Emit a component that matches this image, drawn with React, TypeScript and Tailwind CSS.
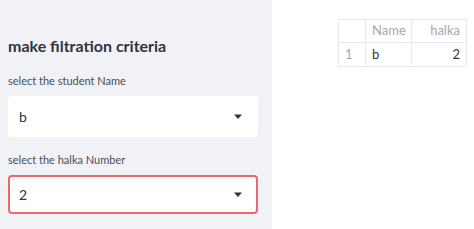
const font = { fontFamily: '"Source Sans Pro", Lato, "Noto Sans", sans-serif' };

const Caret = () => (
  <svg width="10" height="6" viewBox="0 0 10 6" className="fill-[#31333f]">
    <path d="M1 0.5h8L5 5z" />
  </svg>
);

const Select = ({ value, focused = false }: { value: string; focused?: boolean }) => (
  <div
    className={
      focused
        ? 'flex h-[39px] items-center justify-between rounded-[4px] border-2 border-[#e8696b] bg-white pl-[9px] pr-[13px]'
        : 'flex h-[41px] items-center justify-between rounded-[4px] bg-white pl-[11px] pr-[15px]'
    }
  >
    <span className="text-[14px] text-[#31333f]">{value}</span>
    <Caret />
  </div>
);

export default function App() {
  return (
    <div className="flex h-[229px] w-[474px] bg-white" style={font}>
      <aside className="flex w-[272px] flex-col bg-[#f0f2f6] px-2 pt-[35px]">
        <h2 className="text-[16px] font-bold leading-[22px] text-[#31333f]">make filtration criteria</h2>
        <label className="mt-[17px] text-[11px] leading-[14px] text-[#4a4c57]">select the student Name</label>
        <div className="mt-[8px] w-[250px]">
          <Select value="b" />
        </div>
        <label className="mt-[16px] text-[11px] leading-[14px] text-[#4a4c57]">select the halka Number</label>
        <div className="mt-[8px] w-[250px]">
          <Select value="2" focused />
        </div>
      </aside>
      <main className="pl-[66px] pt-[19px]">
        <table className="border-collapse text-[13px]">
          <thead>
            <tr className="h-[23px]">
              <th className="w-[27px] border border-[#e6e9ef]"></th>
              <th className="w-[46px] border border-[#e6e9ef] pl-[6px] text-left font-normal text-[#a3a8b4]">Name</th>
              <th className="w-[55px] border border-[#e6e9ef] pr-[6px] text-right font-normal text-[#a3a8b4]">halka</th>
            </tr>
          </thead>
          <tbody>
            <tr className="h-[24px]">
              <td className="border border-[#e6e9ef] pl-[6px] text-[#a3a8b4]">1</td>
              <td className="border border-[#e6e9ef] pl-[6px] text-[#31333f]">b</td>
              <td className="border border-[#e6e9ef] pr-[6px] text-right text-[#31333f]">2</td>
            </tr>
          </tbody>
        </table>
      </main>
    </div>
  );
}
